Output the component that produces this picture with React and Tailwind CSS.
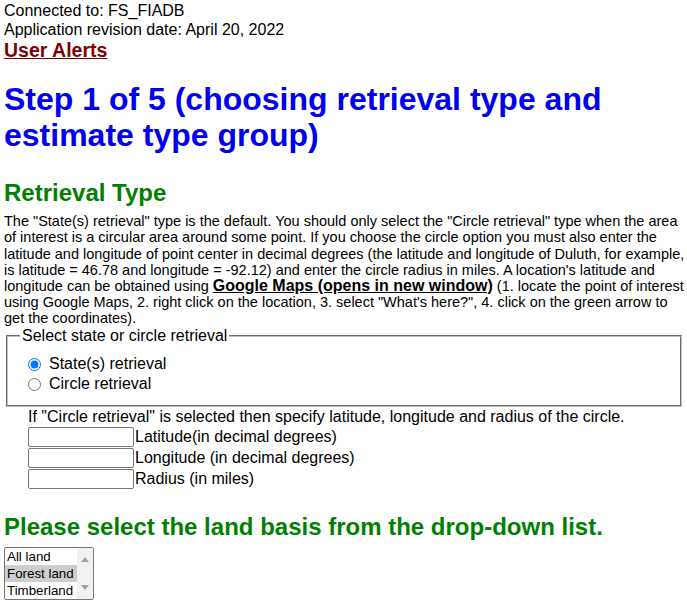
export default function App() {
  const font = { fontFamily: '"Liberation Sans", Arial, sans-serif' };
  return (
    <div className="bg-white text-black w-[687px] h-[613px] overflow-hidden pt-[2px] pl-[4px] pr-[2px]" style={font}>
      <div className="text-[16px] leading-[18.5px]">Connected to: FS_FIADB</div>
      <div className="text-[16px] leading-[18.5px]">Application revision date: April 20, 2022</div>
      <div className="text-[19.5px] leading-[22px] font-bold">
        <a href="#" className="text-[#800000] underline">User Alerts</a>
      </div>
      <h1 className="mt-[19.5px] text-[32px] leading-[1.15] font-bold text-[#0000ee]">
        Step 1 of 5 (choosing retrieval type and estimate type group)
      </h1>
      <h2 className="mt-[24.5px] text-[24px] leading-[1.15] font-bold text-[#008000]">Retrieval Type</h2>
      <p className="mt-[7px] text-[14.5px] leading-[16.2px]">
        The "State(s) retrieval" type is the default. You should only select the "Circle retrieval" type when the area of interest is a circular area around some point. If you choose the circle option you must also enter the latitude and longitude of point center in decimal degrees (the latitude and longitude of Duluth, for example, is latitude = 46.78 and longitude = -92.12) and enter the circle radius in miles. A location's latitude and longitude can be obtained using{" "}
        <a href="#" className="font-bold text-[16px] leading-[16px] underline text-black">Google Maps (opens in new window)</a>{" "}
        (1. locate the point of interest using Google Maps, 2. right click on the location, 3. select "What's here?", 4. click on the green arrow to get the coordinates).
      </p>
      <fieldset className="ml-[2px] mr-[3px] px-[12px] pt-[9px] pb-[11px] border-2 [border-style:groove] border-[#c0c0c0]">
        <legend className="px-[2px] text-[16px] leading-[1.15]">Select state or circle retrieval</legend>
        <label className="flex items-center h-[20px] text-[16px] pl-[8px]">
          <input type="radio" name="rt" defaultChecked className="w-[13px] h-[13px] m-0" />
          <span className="ml-[8px]">State(s) retrieval</span>
        </label>
        <label className="flex items-center h-[20px] text-[16px] pl-[8px]">
          <input type="radio" name="rt" className="w-[13px] h-[13px] m-0" />
          <span className="ml-[8px]">Circle retrieval</span>
        </label>
      </fieldset>
      <div className="ml-[24px] mt-[1px] text-[16px] leading-[1.15]">
        <div>If "Circle retrieval" is selected then specify latitude, longitude and radius of the circle.</div>
        <div className="flex flex-col gap-[1px] mt-[1px]">
          {["Latitude(in decimal degrees)", "Longitude (in decimal degrees)", "Radius (in miles)"].map((t) => (
            <div key={t} className="flex items-center h-[20px]">
              <input type="text" className="w-[106px] h-[20px] border border-[#767676] rounded-[2px] bg-white" />
              <span className="ml-[1px]">{t}</span>
            </div>
          ))}
        </div>
      </div>
      <h2 className="mt-[24px] text-[24px] leading-[1.15] font-bold text-[#008000]">
        Please select the land basis from the drop-down list.
      </h2>
      <div className="mt-[6px] w-[90px] h-[53px] border border-[#767676] rounded-[2px] flex text-[13.33px] leading-[17px] bg-white">
        <div className="flex-1 flex flex-col">
          <div className="px-[2px] h-[17px]">All land</div>
          <div className="px-[2px] h-[17px] bg-[#cecece]">Forest land</div>
          <div className="px-[2px] h-[17px]">Timberland</div>
        </div>
        <div className="w-[16px] bg-[#f1f1f1] flex flex-col items-center justify-between py-[9px]">
          <svg width="8" height="5" viewBox="0 0 8 5"><path d="M0 5 L4 0 L8 5 Z" fill="#a3a3a3" /></svg>
          <svg width="8" height="5" viewBox="0 0 8 5"><path d="M0 0 L4 5 L8 0 Z" fill="#a3a3a3" /></svg>
        </div>
      </div>
    </div>
  );
}
